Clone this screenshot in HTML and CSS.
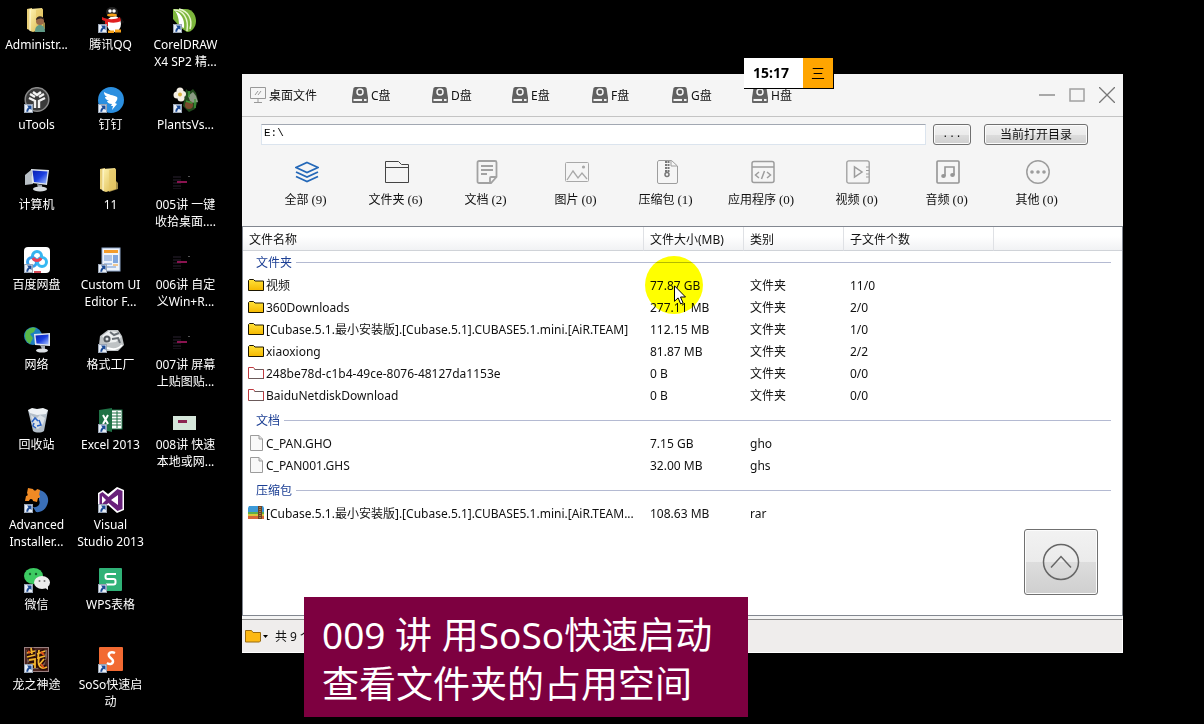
FILE: index.html
```html
<!DOCTYPE html>
<html lang="zh-CN">
<head>
    <meta charset="UTF-8">
    <meta name="viewport" content="width=device-width, initial-scale=1.0">
    <title>SoSo快速启动</title>
    <link rel="stylesheet" href="styles.css">
</head>
<body>
    <svg class="sprite" aria-hidden="true">
        <defs>
            <linearGradient id="gFolder" x1="0" y1="0" x2="1" y2="1">
                <stop offset="0" stop-color="#fff3b0"/><stop offset="1" stop-color="#d9b64a"/>
            </linearGradient>
            <linearGradient id="gScreen" x1="0" y1="0" x2="1" y2="1">
                <stop offset="0" stop-color="#0a1fb0"/><stop offset="0.5" stop-color="#1b3fe0"/><stop offset="1" stop-color="#a8c4ff"/>
            </linearGradient>
            <linearGradient id="gYellow" x1="0" y1="0" x2="0" y2="1">
                <stop offset="0" stop-color="#ffe23a"/><stop offset="1" stop-color="#f5b800"/>
            </linearGradient>
        </defs>
        <symbol id="shortcut" viewBox="0 0 9 9">
            <rect width="9" height="9" fill="#e8eef6"/>
            <rect x="0.500" y="0.500" width="8" height="8" fill="none" stroke="#9aa5b5"/>
            <path d="M3 1.500h4.500v4.500L6 4.700C4.800 5.500 4.300 6.300 4.200 7.800H2.300C2.300 5.800 3 4.300 4.500 3.200z" fill="#1b4a96"/>
        </symbol>
        <symbol id="deskfolder" viewBox="0 0 26 26">
            <path d="M3 2l5-1v23l-5-2z" fill="#e8cf78"/>
            <path d="M6 2l12-1 1 2v19L9 25l-3-1z" fill="url(#gFolder)"/>
            <path d="M12 3l7-1v12l2 2v6l-9 3z" fill="#e6c867" opacity="0.700"/>
            <path d="M6 2v22" stroke="#fffbe0"/>
        </symbol>
        <symbol id="disk" viewBox="0 0 16 16">
            <path d="M3 0h10l1.500 1L16 11H0L1.500 1z" fill="#5f5f5f"/>
            <circle cx="8" cy="5" r="3" fill="none" stroke="#f5f5f5" stroke-width="1.500"/>
            <path d="M0 10.500h16V15a1 1 0 0 1-1 1H1a1 1 0 0 1-1-1z" fill="#666"/>
            <rect x="1.500" y="12" width="8.500" height="2" fill="#f5f5f5"/>
            <rect x="12" y="12" width="2.500" height="2" fill="#f5f5f5"/>
        </symbol>
        <symbol id="yfolder" viewBox="0 0 16 14">
            <path d="M0.500 12.500v-10l1-1h4l1.500 1.500h8.500v9.500z" fill="url(#gYellow)" stroke="#1c1600"/>
        </symbol>
        <symbol id="rfolder" viewBox="0 0 16 14">
            <path d="M0.500 12.500v-11h5l1.500 2h8.500v9z" fill="#fff" stroke="#c03a40"/>
            <path d="M1 12.500h15M6.500 3.500h9" stroke="#6b5a5a"/>
        </symbol>
        <symbol id="page" viewBox="0 0 16 16">
            <path d="M2.500 0.500h8.500l3.500 3.500v11.500h-12z" fill="#f8f8f8" stroke="#9c9c9c"/>
            <path d="M11 0.500v3.500h3.500" fill="#ddd" stroke="#9c9c9c"/>
        </symbol>
        <symbol id="clip" viewBox="0 0 26 26">
            <path d="M3 9v13M5 9v13M7 9v13M9 9v13" stroke="#2b2230" stroke-dasharray="2 1"/>
            <rect x="6" y="14" width="10" height="2" fill="#8a1450"/>
            <rect x="17" y="9" width="2" height="1" fill="#555"/>
        </symbol>
    </svg>

    <main class="desktop">
        <ul class="icons">
            <li class="icon">
                <svg viewBox="0 0 26 26"><use href="#deskfolder"/><path d="M11 25c0-5 2-7 5-7s5 2 5 7z" fill="#5f9a86"/><circle cx="16" cy="14" r="4" fill="#9b6a4a"/><path d="M12 13c0-5 8-5 8 0-2-2-5-2-8 0z" fill="#2e241e"/></svg>
                <span>Administr...</span>
            </li>
            <li class="icon">
                <svg viewBox="0 0 26 26"><path d="M5 16l4-4M22 12l3 4" stroke="#111" stroke-width="3"/><ellipse cx="16" cy="17" rx="7" ry="8" fill="#fff"/><ellipse cx="14" cy="5" rx="6" ry="5" fill="#222"/><circle cx="12" cy="4" r="1.800" fill="#fff"/><circle cx="16" cy="4" r="1.800" fill="#fff"/><ellipse cx="14" cy="8" rx="5" ry="1.600" fill="#f6a11a"/><path d="M4 10c6 3 13 3 18 0l1 4c-4 2-9 2-13 1v4H7v-5l-3-1z" fill="#e02020"/><path d="M10 25h6M17 24h6" stroke="#f6a11a" stroke-width="3"/><use href="#shortcut" y="17" width="9" height="9"/></svg>
                <span>腾讯QQ</span>
            </li>
            <li class="icon">
                <svg viewBox="0 0 26 26"><path d="M0 2h12c9 0 11 8 11 12 0 6-4 11-9 11L8 21 0 12z" fill="#7db63c"/><path d="M1 3c9 0 15 8 13 21M6 2c9 2 14 10 11 20" fill="none" stroke="#e9f5cf" stroke-width="1.500"/><path d="M2 4c6 2 10 8 9 17l-5-2C6 12 5 8 2 4z" fill="#fff"/><use href="#shortcut" y="17" width="9" height="9"/></svg>
                <span>CorelDRAW<br>X4 SP2 精...</span>
            </li>
            <li class="icon">
                <svg viewBox="0 0 26 26"><circle cx="13" cy="12.500" r="11.800" fill="#3a3a3a" stroke="#8a8a8a" stroke-width="1.500"/><path d="M6 7l5 3M20 7l-5 3M5 11l6 3v7M21 11l-6 3v7M9 5l4 3 4-3" fill="none" stroke="#f2f2f2" stroke-width="2.400"/><use href="#shortcut" y="17" width="9" height="9"/></svg>
                <span>uTools</span>
            </li>
            <li class="icon">
                <svg viewBox="0 0 26 26"><circle cx="13" cy="13" r="13" fill="#2b8fe0"/><path d="M6 5c5 3 9 3 13 5 1 1 0 4-2 6l2 1-5 6 1-4h-2l1-2c-3 0-5-2-5-3l2 0c-3-1-4-3-4-4l2 0C7 9 6 7 6 5z" fill="#fff"/><use href="#shortcut" y="17" width="9" height="9"/></svg>
                <span>钉钉</span>
            </li>
            <li class="icon">
                <svg viewBox="0 0 26 26"><path d="M13 2l3 3 4-3 3 4 2 8-3 8-6 3-6-6z" fill="#214a1c"/><path d="M15 9l5-4 3 4 2 6-7 1z" fill="#8b9a83"/><circle cx="16" cy="18" r="4" fill="#7a4a2c"/><g fill="#f4efe4"><circle cx="7" cy="4" r="3.500"/><circle cx="4" cy="8" r="3.500"/><circle cx="10" cy="7" r="3"/><circle cx="8" cy="11" r="3.500"/></g><circle cx="7" cy="7.500" r="2" fill="#d8b540"/><path d="M16 4v6M22 12v9M13 14l6 2" stroke="#3f9a38" stroke-width="1.500"/><use href="#shortcut" y="17" width="9" height="9"/></svg>
                <span>PlantsVs...</span>
            </li>
            <li class="icon">
                <svg viewBox="0 0 26 26"><path d="M1 8l6-5 2 14-8 1z" fill="#b9c0c6"/><path d="M7 2l18 1-2 15L8 16z" fill="#dfe6ee"/><path d="M8.500 3.500l15 1-1.500 12-12-1.500z" fill="url(#gScreen)"/><path d="M13 17l5 1v3h-4z" fill="#9aa2aa"/><ellipse cx="16" cy="22" rx="7" ry="2.500" fill="#d5dade"/></svg>
                <span>计算机</span>
            </li>
            <li class="icon">
                <svg viewBox="0 0 26 26"><use href="#deskfolder" x="-1"/></svg>
                <span>11</span>
            </li>
            <li class="icon">
                <svg viewBox="0 0 26 26"><use href="#clip" x="-2"/></svg>
                <span>005讲 一键<br>收拾桌面....</span>
            </li>
            <li class="icon">
                <svg viewBox="0 0 26 26"><rect width="26" height="26" rx="4" fill="#fff"/><g fill="none" stroke-width="3"><circle cx="13" cy="9" r="4.500" stroke="#35b4f0"/><circle cx="8" cy="15" r="4.500" stroke="#36a0ee"/><circle cx="18" cy="15" r="4.500" stroke="#36b8f2"/><path d="M9 11a4.500 4.500 0 0 0 8 0" stroke="#ee4055"/></g><path d="M10 25h7" stroke="#d84a58" stroke-width="2"/><use href="#shortcut" y="17" width="9" height="9"/></svg>
                <span>百度网盘</span>
            </li>
            <li class="icon">
                <svg viewBox="0 0 26 26"><rect x="4" y="1" width="18" height="23" fill="#eef3fb" stroke="#8fa7cc"/><rect x="6" y="3" width="14" height="3" fill="#f39c2c"/><path d="M6 9h8M6 11h8M6 13h8M6 17h8M6 20h12" stroke="#6c94d2"/><rect x="15" y="8" width="5" height="8" fill="#7fa6de"/><path d="M15 18h5" stroke="#f39c2c"/><use href="#shortcut" y="17" width="9" height="9"/></svg>
                <span>Custom UI<br>Editor F...</span>
            </li>
            <li class="icon">
                <svg viewBox="0 0 26 26"><use href="#clip" x="-2"/></svg>
                <span>006讲 自定<br>义Win+R...</span>
            </li>
            <li class="icon">
                <svg viewBox="0 0 26 26"><circle cx="9" cy="9" r="9" fill="#1f7fc0"/><path d="M2 4c4-4 8-4 10-3l-2 4-4 2 3 4-3 6c-5-3-6-8-4-13z" fill="#58b848"/><path d="M10 7l16-1v13l-15-1z" fill="#dfe6ee"/><path d="M11.500 8.500l13-1v10l-12-1z" fill="url(#gScreen)"/><path d="M16 18l5 1v3h-3z" fill="#a6adb4"/><ellipse cx="18" cy="23.500" rx="6" ry="2" fill="#dde1e5"/></svg>
                <span>网络</span>
            </li>
            <li class="icon">
                <svg viewBox="0 0 26 26"><path d="M2 9l8-6 10 0 4 6 2 9-6 6H8l-7-6z" fill="#bfc3c5"/><path d="M4 9l7-5 9 1 3 5-5 5-9 1z" fill="#eef0f1"/><circle cx="9" cy="12" r="3.500" fill="#555b60"/><circle cx="9" cy="12" r="1.500" fill="#e6e8ea"/><path d="M12 5l4 3 5-2M14 12l6-1 2 5" fill="none" stroke="#6a7076" stroke-width="2"/><path d="M9 21c6 2 12 1 15-3" fill="none" stroke="#fff" stroke-width="2"/><use href="#shortcut" y="17" width="9" height="9"/></svg>
                <span>格式工厂</span>
            </li>
            <li class="icon">
                <svg viewBox="0 0 26 26"><use href="#clip" x="-2"/></svg>
                <span>007讲 屏幕<br>上贴图贴...</span>
            </li>
            <li class="icon">
                <svg viewBox="0 0 26 26"><path d="M4 3h20l-4 21c-3 2-8 2-11 0z" fill="#b4bfc9"/><path d="M4 3l4-2 5 1 6-1 5 2-2 4-9 1-7-2z" fill="#eef2f5"/><path d="M7 8l5 4 4-4 5 3-2 6-5 5-5-3z" fill="#dbe2e8"/><path d="M8 15l3-4 3 3M15 13l2 5-4 1M12 21l-3-2 1-3" fill="none" stroke="#2a62c4" stroke-width="1.500"/></svg>
                <span>回收站</span>
            </li>
            <li class="icon">
                <svg viewBox="0 0 26 26"><rect x="12" y="3" width="12" height="19" fill="#fff" stroke="#1f7246"/><path d="M14 6h9M14 9h9M14 12h9M14 15h9M14 18h9M19 4v17" stroke="#1f7246"/><path d="M1 3l13-2v24L1 22z" fill="#1f7246"/><path d="M5 8l5 9M10 8l-5 9" stroke="#fff" stroke-width="2"/><use href="#shortcut" y="17" width="9" height="9"/></svg>
                <span>Excel 2013</span>
            </li>
            <li class="icon">
                <svg viewBox="0 0 26 26"><rect x="0" y="9" width="23" height="14" fill="#d5e6da"/><rect x="5" y="13" width="9" height="3" fill="#8a2450"/></svg>
                <span>008讲 快速<br>本地或网...</span>
            </li>
            <li class="icon">
                <svg viewBox="0 0 26 26"><path d="M15 3c6 1 10 6 9 12s-6 11-12 10L9 20c5 1 8-3 6-7z" fill="#3a6fb8"/><path d="M4 1l5 1c1 2 3 2 4 0l3 1-1 5c2 1 1 3-1 3l-1 4-4-1c0-2-3-3-4 0H1l1-5c2 0 2-2 1-3z" fill="#f08a24"/><use href="#shortcut" y="17" width="9" height="9"/></svg>
                <span>Advanced<br>Installer...</span>
            </li>
            <li class="icon">
                <svg viewBox="0 0 26 26"><path d="M0 6l5-3 5 4 9-7 7 3v20l-7 3-9-8-5 4-5-3z" fill="#fff"/><path d="M1.500 7l3-2 6 5 9-8 5 2v18l-5 2-9-8-6 5-3-2z" fill="#68217a"/><path d="M4 9v8l4-4zM20 8l-7 5 7 5z" fill="#fff"/><use href="#shortcut" y="17" width="9" height="9"/></svg>
                <span>Visual<br>Studio 2013</span>
            </li>
            <li class="icon">
                <svg viewBox="0 0 26 26"><ellipse cx="9.500" cy="9" rx="9.500" ry="8" fill="#3ccb62"/><circle cx="6" cy="7" r="1.200" fill="#14632c"/><circle cx="12" cy="7" r="1.200" fill="#14632c"/><ellipse cx="18" cy="15.500" rx="8" ry="6.500" fill="#ececec"/><path d="M20 20l4 3v-4z" fill="#ececec"/><circle cx="15.500" cy="14" r="1" fill="#777"/><circle cx="20.500" cy="14" r="1" fill="#777"/><use href="#shortcut" y="17" width="9" height="9"/></svg>
                <span>微信</span>
            </li>
            <li class="icon">
                <svg viewBox="0 0 26 26"><rect x="1" y="1" width="23" height="23" rx="1" fill="#2fb277"/><path d="M18 7H9.500a2 2 0 0 0-2 2v1a2 2 0 0 0 2 2h6a2 2 0 0 1 2 2v1.500a2 2 0 0 1-2 2H8" fill="none" stroke="#fff" stroke-width="2"/><use href="#shortcut" y="17" width="9" height="9"/></svg>
                <span>WPS表格</span>
            </li>
            <li class="icon">
                <svg viewBox="0 0 26 26"><rect x="0.500" y="0.500" width="24" height="24" fill="#4a2420" stroke="#9a8080"/><path d="M2 3h21v7l-4 12H4z" fill="#7a625a"/><path d="M3 6l8-2M7 1l1 6M3 10l8-2M5 13l6-1v9M4 18l7-1M15 3l-1 8 7-2M13 7l8-3M15 11c-2 8 2 12 8 9M20 12l-5 6" fill="none" stroke="#2a0a08" stroke-width="5"/><path d="M3 6l8-2M7 1l1 6M3 10l8-2M5 13l6-1v9M4 18l7-1M15 3l-1 8 7-2M13 7l8-3M15 11c-2 8 2 12 8 9M20 12l-5 6" fill="none" stroke="#f2b52c" stroke-width="1.800"/><path d="M4 4l2 2M17 5l3 3M17 17l3 4" stroke="#e0521c" stroke-width="2"/><use href="#shortcut" y="17" width="9" height="9"/></svg>
                <span>龙之神途</span>
            </li>
            <li class="icon">
                <svg viewBox="0 0 26 26"><rect x="1" y="0" width="24" height="24" rx="1" fill="#f26a32"/><path d="M17 6c-4-2-7 0-6 3 1 2 4 3 4 5 0 3-3 4-6 2" fill="none" stroke="#fff" stroke-width="2.500"/><use href="#shortcut" y="17" width="9" height="9"/></svg>
                <span>SoSo快速启<br>动</span>
            </li>
        </ul>

        <section class="window">
            <header class="titlebar">
                <nav class="tabs">
                    <a class="tab" href="#"><svg viewBox="0 0 16 16"><path d="M0.500 0.500h15v11h-15zM4 15.500h8M8 12v3" fill="none" stroke="#999"/><path d="M5 8l3-4M8 8l3-4" stroke="#999"/></svg>桌面文件</a>
                    <a class="tab" href="#"><svg><use href="#disk"/></svg>C盘</a>
                    <a class="tab" href="#"><svg><use href="#disk"/></svg>D盘</a>
                    <a class="tab" href="#"><svg><use href="#disk"/></svg>E盘</a>
                    <a class="tab" href="#"><svg><use href="#disk"/></svg>F盘</a>
                    <a class="tab" href="#"><svg><use href="#disk"/></svg>G盘</a>
                    <a class="tab" href="#"><svg><use href="#disk"/></svg>H盘</a>
                </nav>
                <div class="controls">
                    <button type="button" aria-label="最小化"><svg viewBox="0 0 16 16"><path d="M0 8h16" stroke="#a8a8a8" stroke-width="2"/></svg></button>
                    <button type="button" aria-label="最大化"><svg viewBox="0 0 16 16"><rect x="1" y="2" width="14" height="12" fill="none" stroke="#a0a0a0" stroke-width="1.500"/></svg></button>
                    <button type="button" aria-label="关闭"><svg viewBox="0 0 16 16"><path d="M0 0l16 16M16 0L0 16" stroke="#777" stroke-width="1.300"/></svg></button>
                </div>
            </header>

            <form class="pathbar">
                <input class="path" type="text" value="E:\" aria-label="路径">
                <button class="btn browse" type="button">...</button>
                <button class="btn current" type="button">当前打开目录</button>
            </form>

            <nav class="categories">
                <a class="category" href="#">
                    <svg viewBox="0 0 24 24"><path d="M12 2.500l11 5-11 5-11-5zM1 12l11 5 11-5M1 16.500l11 5 11-5" fill="none" stroke="#2468b8" stroke-width="1.800"/></svg>
                    <span>全部<span class="count">(9)</span></span>
                </a>
                <a class="category" href="#">
                    <svg viewBox="0 0 24 24"><path d="M0.500 22.500v-21h13l3 3h7v18zM0.500 7.500h23" fill="none" stroke="#444"/></svg>
                    <span>文件夹<span class="count">(6)</span></span>
                </a>
                <a class="category" href="#">
                    <svg viewBox="0 0 24 24"><path d="M4 1h16a1.500 1.500 0 0 1 1.500 1.500V17L16 23H4a1.500 1.500 0 0 1-1.500-1.500v-19A1.500 1.500 0 0 1 4 1zM15 23v-5a1 1 0 0 1 1-1h5M6 6h12M6 10h12M6 14h6" fill="none" stroke="#a2a2a2" stroke-width="1.800"/></svg>
                    <span>文档<span class="count">(2)</span></span>
                </a>
                <a class="category" href="#">
                    <svg viewBox="0 0 24 24"><rect x="0.500" y="2.500" width="23" height="19" rx="1" fill="none" stroke="#a8a8a8"/><path d="M2 20l6-9 5 7 4-5 5 6" fill="none" stroke="#a8a8a8" stroke-width="1.300"/><circle cx="18.500" cy="7" r="1.600" fill="#a8a8a8"/></svg>
                    <span>图片<span class="count">(0)</span></span>
                </a>
                <a class="category" href="#">
                    <svg viewBox="0 0 24 24"><path d="M3.500 0.500h13l6 5.500v16a1.500 1.500 0 0 1-1.500 1.500H4a1.500 1.500 0 0 1-1.500-1.500v-20zM16 0.500V6h6" fill="none" stroke="#9d9d9d"/><path d="M11 1v11M13.500 1v11" stroke="#777" stroke-width="2" stroke-dasharray="2 1"/><circle cx="12" cy="14.500" r="2" fill="none" stroke="#777" stroke-width="1.500"/></svg>
                    <span>压缩包<span class="count">(1)</span></span>
                </a>
                <a class="category" href="#">
                    <svg viewBox="0 0 24 24"><rect x="1" y="1.500" width="22" height="21" rx="2" fill="none" stroke="#9d9d9d" stroke-width="1.500"/><path d="M1 7h22M8 12l-3.500 3L8 18M16 12l3.500 3-3.500 3M13.500 11l-3 8" fill="none" stroke="#9d9d9d" stroke-width="1.500"/></svg>
                    <span>应用程序<span class="count">(0)</span></span>
                </a>
                <a class="category" href="#">
                    <svg viewBox="0 0 24 24"><rect x="0.800" y="0.800" width="22.400" height="22.400" rx="2" fill="none" stroke="#9d9d9d" stroke-width="1.300"/><path d="M8.500 7v10l7.500-5z" fill="none" stroke="#9d9d9d" stroke-width="1.500"/><path d="M20 7h3M20 10.500h3M20 14h3M20 17h3" stroke="#9d9d9d"/></svg>
                    <span>视频<span class="count">(0)</span></span>
                </a>
                <a class="category" href="#">
                    <svg viewBox="0 0 24 24"><rect x="1" y="1" width="22" height="22" rx="1" fill="none" stroke="#959595" stroke-width="1.600"/><path d="M9 16V7h9v8" fill="none" stroke="#959595" stroke-width="1.600"/><ellipse cx="7.500" cy="16" rx="2.300" ry="2" fill="#959595"/><ellipse cx="16.500" cy="15" rx="2.300" ry="2" fill="#959595"/></svg>
                    <span>音频<span class="count">(0)</span></span>
                </a>
                <a class="category" href="#">
                    <svg viewBox="0 0 24 24"><circle cx="12" cy="12" r="11.200" fill="none" stroke="#9d9d9d" stroke-width="1.500"/><g fill="#9d9d9d"><circle cx="6" cy="12" r="1.800"/><circle cx="12" cy="12" r="1.800"/><circle cx="18" cy="12" r="1.800"/></g></svg>
                    <span>其他<span class="count">(0)</span></span>
                </a>
            </nav>

            <div class="list">
                <table class="files">
                    <colgroup>
                        <col class="col-name"><col class="col-size"><col class="col-type"><col class="col-sub"><col>
                    </colgroup>
                    <thead>
                        <tr><th>文件名称</th><th>文件大小(MB)</th><th>类别</th><th>子文件个数</th><td></td></tr>
                    </thead>
                    <tbody>
                        <tr class="group"><th colspan="5"><span>文件夹</span></th></tr>
                        <tr><td><svg><use href="#yfolder"/></svg>视频</td><td>77.87 GB</td><td>文件夹</td><td>11/0</td><td></td></tr>
                        <tr><td><svg><use href="#yfolder"/></svg>360Downloads</td><td>277.11 MB</td><td>文件夹</td><td>2/0</td><td></td></tr>
                        <tr><td><svg><use href="#yfolder"/></svg>[Cubase.5.1.最小安装版].[Cubase.5.1].CUBASE5.1.mini.[AiR.TEAM]</td><td>112.15 MB</td><td>文件夹</td><td>1/0</td><td></td></tr>
                        <tr><td><svg><use href="#yfolder"/></svg>xiaoxiong</td><td>81.87 MB</td><td>文件夹</td><td>2/2</td><td></td></tr>
                        <tr><td><svg><use href="#rfolder"/></svg>248be78d-c1b4-49ce-8076-48127da1153e</td><td>0 B</td><td>文件夹</td><td>0/0</td><td></td></tr>
                        <tr><td><svg><use href="#rfolder"/></svg>BaiduNetdiskDownload</td><td>0 B</td><td>文件夹</td><td>0/0</td><td></td></tr>
                    </tbody>
                    <tbody>
                        <tr class="group"><th colspan="5"><span>文档</span></th></tr>
                        <tr><td><svg><use href="#page"/></svg>C_PAN.GHO</td><td>7.15 GB</td><td>gho</td><td></td><td></td></tr>
                        <tr><td><svg><use href="#page"/></svg>C_PAN001.GHS</td><td>32.00 MB</td><td>ghs</td><td></td><td></td></tr>
                    </tbody>
                    <tbody>
                        <tr class="group"><th colspan="5"><span>压缩包</span></th></tr>
                        <tr><td><svg viewBox="0 0 16 16"><path d="M1 1h14l1 2v5H0V3z" fill="#3c9ad8"/><rect y="7" width="16" height="4" fill="#5fb04a"/><rect y="9" width="16" height="2" fill="#d8c83a"/><rect y="11" width="16" height="3" fill="#d9663a"/><rect x="10" y="1" width="4" height="13" fill="#6b4226"/><path d="M12 2v12" stroke="#d8b868" stroke-dasharray="1 1"/></svg>[Cubase.5.1.最小安装版].[Cubase.5.1].CUBASE5.1.mini.[AiR.TEAM...</td><td>108.63 MB</td><td>rar</td><td></td><td></td></tr>
                    </tbody>
                </table>
                <button class="btn up" type="button" aria-label="返回上级"><svg viewBox="0 0 38 38"><circle cx="19" cy="19" r="17.500" fill="none" stroke="#666" stroke-width="1.500"/><path d="M9 24.500l10-11 10 11" fill="none" stroke="#666" stroke-width="1.500"/></svg></button>
            </div>

            <footer class="status">
                <button type="button" aria-label="文件夹"><svg class="status-folder" viewBox="0 0 16 14"><path d="M0.500 13V1.500h6l1.500 2h7.500V12l-1 1z" fill="#fdb913" stroke="#9a6c10"/></svg><svg class="caret" viewBox="0 0 5 3"><path d="M0 0h5L2.500 3z"/></svg></button>
                <span>共 9 个</span>
            </footer>
        </section>

        <div class="clock"><time>15:17</time><span>三</span></div>
        <div class="spot"></div>
        <svg class="cursor" viewBox="0 0 12 20"><path d="M0.500 0.800v15.500l3.600-3.400 2.600 6 2.400-1-2.600-5.900h5z" fill="#fff" stroke="#000"/></svg>
        <h1 class="banner">009 讲 用SoSo快速启动<br>查看文件夹的占用空间</h1>
    </main>
</body>
</html>
```
FILE: styles.css
```css
* {
    box-sizing: border-box;
}
body {
    margin: 0;
    background-color: #000;
    color: #111;
    font-family: "Noto Sans", "Noto Sans CJK SC", sans-serif;
    font-size: 12px;
    line-height: 17px;
}
a {
    color: inherit;
    text-decoration: none;
}
button {
    padding: 0;
    border: none;
    background: none;
    font: inherit;
    color: inherit;
}
svg {
    display: block;
    flex: none;
}
.sprite {
    position: absolute;
    width: 0;
    height: 0;
}
.desktop {
    position: relative;
    height: 100vh;
    overflow: hidden;
}

/* desktop icons */
.icons {
    display: grid;
    grid-template-columns: 73px 75px 75px;
    grid-auto-rows: 80px;
    margin: 0;
    padding: 7px 0 0;
    list-style: none;
    color: #fff;
}
.icon {
    display: flex;
    flex-direction: column;
    align-items: center;
    gap: 3px;
    text-align: center;
    white-space: nowrap;
}
/* the last three rows only use two columns */
.icon:nth-child(2n+19) {
    grid-column: 1;
}
.icon svg {
    width: 26px;
    height: 26px;
}

/* window */
.window {
    position: absolute;
    top: 74px;
    right: 81px;
    bottom: 71px;
    left: 242px;
    display: flex;
    flex-direction: column;
    background-color: #f5f5f5;
}
.titlebar {
    display: flex;
    justify-content: space-between;
    align-items: center;
    height: 43px;
    padding: 0 8px;
    border-bottom: 1px solid #c4c4c4;
}
.tabs {
    display: flex;
    gap: 35px;
}
.tab {
    display: flex;
    align-items: center;
    gap: 3px;
    min-width: 45px;
}
.tab svg,
.controls svg {
    width: 16px;
    height: 16px;
}
.controls {
    display: flex;
    gap: 14px;
}
.pathbar {
    display: flex;
    gap: 7px;
    padding: 7px 35px 0 19px;
}
.path {
    flex: 1;
    min-width: 0;
    height: 21px;
    padding: 0 2px 3px;
    border: 1px solid #dbe4ee;
    border-top-color: #a2a8b2;
    background-color: #fff;
    font-family: "Liberation Mono", monospace;
    font-size: 11px;
    color: #000;
}
.btn {
    border: 1px solid #707070;
    border-radius: 3px;
    background: linear-gradient(#f2f2f2 0%, #ebebeb 50%, #dddddd 50%, #cfcfcf 100%);
    box-shadow: inset 0 0 0 1px #fcfcfc;
}
.browse {
    width: 38px;
    height: 21px;
    font-family: "Liberation Mono", monospace;
    font-size: 11px;
}
.current {
    width: 104px;
    height: 21px;
    margin-left: 6px;
}
.categories {
    display: flex;
    padding: 15px 20px 0;
}
.category {
    display: flex;
    flex-direction: column;
    align-items: center;
    gap: 7px;
    min-width: 90px;
    padding: 0 16px;
    white-space: nowrap;
}
.category > span {
    padding-right: 3px;
}
.category svg {
    width: 24px;
    height: 24px;
}
.count {
    margin-left: 3px;
    font-family: "Liberation Serif", serif;
    font-size: 13px;
}

/* file list */
.list {
    position: relative;
    flex: 1;
    margin-top: 18px;
    border: 1px solid #828790;
    background-color: #fff;
}
.files {
    width: 100%;
    table-layout: fixed;
    border-collapse: separate;
    border-spacing: 0;
    white-space: nowrap;
}
.col-name {
    width: 401px;
}
.col-size,
.col-type {
    width: 100px;
}
.col-sub {
    width: 150px;
}
.files th,
.files td {
    height: 22px;
    padding: 0 0 0 6px;
    font-weight: normal;
    text-align: left;
}
.files thead th,
.files thead td {
    height: 24px;
    padding-top: 2px;
    border-bottom: 1px solid #d0d3d8;
    background: linear-gradient(#fff 40%, #f1f2f4);
}
.files thead th {
    border-right: 1px solid #dfe1e5;
}
.files tbody td:first-child {
    display: flex;
    align-items: center;
    gap: 2px;
    padding-left: 5px;
}
.files tbody svg {
    width: 16px;
    height: 16px;
}
.files .group th {
    height: 26px;
    padding: 2px 11px 0 13px;
    color: #1c3f94;
}
.files tbody:nth-of-type(1) .group th {
    height: 23px;
    padding-top: 0;
}
.group span {
    display: flex;
    align-items: center;
    gap: 4px;
}
.group span::after {
    content: "";
    flex: 1;
    height: 1px;
    background-color: #b4bad2;
}
.up {
    position: absolute;
    right: 24px;
    bottom: 20px;
    display: grid;
    place-items: center;
    width: 74px;
    height: 66px;
}
.up svg {
    width: 38px;
    height: 38px;
}
.status {
    display: flex;
    align-items: center;
    gap: 7px;
    height: 34px;
    margin-top: 3px;
    padding: 0 3px;
    border: 1px solid #fff;
    border-top-color: #8c8c8c;
    border-left: none;
    background-color: #efedec;
}
.status button {
    display: flex;
    align-items: center;
    gap: 2px;
}
.status-folder {
    width: 16px;
    height: 14px;
}
.caret {
    width: 5px;
    height: 3px;
}

/* overlays */
.clock {
    position: absolute;
    top: 58px;
    left: 744px;
    display: flex;
    border: solid #000;
    border-width: 0 1px 1px 0;
    background-color: #fff;
    font-size: 14px;
    line-height: 30px;
    color: #000;
}
.clock time {
    width: 59px;
    padding-left: 9px;
    font-weight: bold;
}
.clock span {
    width: 30px;
    background-color: #ffa500;
    text-align: center;
}
.spot {
    position: absolute;
    top: 256px;
    left: 645px;
    width: 58px;
    height: 58px;
    border-radius: 50%;
    background-color: #ff0;
    mix-blend-mode: multiply;
}
.cursor {
    position: absolute;
    top: 285px;
    left: 674px;
    width: 12px;
    height: 20px;
}
.banner {
    position: absolute;
    top: 597px;
    left: 304px;
    width: 444px;
    margin: 0;
    padding: 13px 18px 9px;
    background-color: #7d0040;
    color: #fff;
    font-size: 37px;
    font-weight: 400;
    line-height: 49px;
    white-space: nowrap;
}
```
